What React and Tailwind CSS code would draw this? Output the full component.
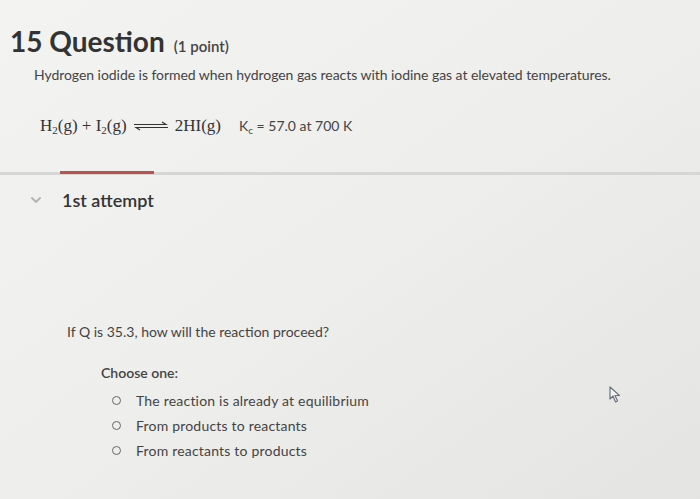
import { ChevronDown } from 'lucide-react'

const OPTIONS = ['The reaction is already at equilibrium', 'From products to reactants', 'From reactants to products']

function Cursor() {
  return (
    <svg width="14" height="18" viewBox="0 0 14 18" className="text-gray-500">
      <path d="M1 1 L1 13 L4 10 L6.5 16 L8.5 15 L6 9.5 L10.5 9.5 Z" fill="#f4f4f2" stroke="currentColor" strokeWidth="1.2" strokeLinejoin="round" />
    </svg>
  )
}

export default function App() {
  return (
    <div className="relative h-[499px] w-[700px] overflow-hidden bg-linear-to-br from-[#f3f3f1] via-[#eeeeec] to-[#e4e4e2] font-['Lato',sans-serif] text-[#3a3a3a]">
      <div className="pl-[10px] pt-[23px]">
        <h1 className="flex items-baseline gap-[9px]">
          <span className="text-[28px] font-bold leading-[36px] text-[#333]">15 Question</span>
          <span className="text-[15px] font-semibold text-[#444]">(1 point)</span>
        </h1>
        <p className="ml-[24px] mt-[5px] text-[14px] tracking-[-0.05px] text-[#444]">
          Hydrogen iodide is formed when hydrogen gas reacts with iodine gas at elevated temperatures.
        </p>
        <div className="ml-[30px] mt-[28px] flex items-center text-[17px] text-[#333]">
          <span className="font-['Liberation_Serif',serif]">
            H<sub className="text-[11px]">2</sub>(g) + I<sub className="text-[11px]">2</sub>(g)
          </span>
          <svg width="36" height="10" viewBox="0 0 36 10" className="mx-[6px] text-[#333]">
            <path d="M1 3.5 H33 L29 1" fill="none" stroke="currentColor" strokeWidth="1.1" />
            <path d="M35 6.5 H3 L7 9" fill="none" stroke="currentColor" strokeWidth="1.1" />
          </svg>
          <span className="font-['Liberation_Serif',serif]">2HI(g)</span>
          <span className="ml-[18px] text-[14px] text-[#444]">
            K<sub className="text-[10px]">c</sub> = 57.0 at 700 K
          </span>
        </div>
      </div>

      <div className="mt-[33px] h-[3px] w-full bg-[#d6d6d4]">
        <div className="ml-[60px] h-[3px] w-[94px] -translate-y-[1px] bg-[#c0504d]" />
      </div>

      <div className="mt-[12px] flex items-center pl-[28px]">
        <ChevronDown size={16} strokeWidth={3} className="text-[#b5b5b5]" />
        <span className="ml-[18px] text-[18px] font-semibold text-[#333]">1st attempt</span>
      </div>

      <div className="pl-[67px] pt-[107px]">
        <p className="text-[14px] text-[#444]">If Q is 35.3, how will the reaction proceed?</p>
        <p className="ml-[34px] mt-[20px] text-[14px] font-semibold text-[#444]">Choose one:</p>
        <ul className="ml-[45px] mt-[7px] flex flex-col gap-[4px]">
          {OPTIONS.map((option) => (
            <li key={option} className="flex items-center text-[14px] tracking-[0.2px] text-[#444]">
              <span className="h-[9px] w-[9px] rounded-full border-[1.5px] border-[#666]" />
              <span className="ml-[15px]">{option}</span>
            </li>
          ))}
        </ul>
      </div>

      <div className="absolute left-[609px] top-[386px]">
        <Cursor />
      </div>
    </div>
  )
}
